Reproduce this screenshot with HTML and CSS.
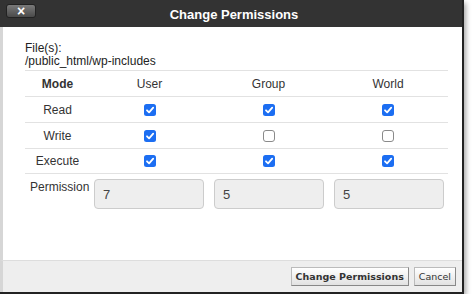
FILE: index.html
```html
<!DOCTYPE html>
<html lang="en">
<head>
  <meta charset="UTF-8" />
  <title>Change Permissions</title>
  <link rel="stylesheet" href="styles.css">
</head>
<body>

  <div class="dialog">
    <div class="titlebar">
      <button class="close-btn">&times;</button>
      <h3>Change Permissions</h3>
    </div>

    <div class="content">
      <div class="files">
        File(s):<br>
        /public_html/wp-includes
      </div>

      <div class="perm-table">
        <div class="row head">
          <span class="mode">Mode</span>
          <span>User</span>
          <span>Group</span>
          <span>World</span>
        </div>
        <div class="row">
          <span>Read</span>
          <span class="box on"></span>
          <span class="box on"></span>
          <span class="box on"></span>
        </div>
        <div class="row">
          <span>Write</span>
          <span class="box on"></span>
          <span class="box"></span>
          <span class="box"></span>
        </div>
        <div class="row">
          <span>Execute</span>
          <span class="box on"></span>
          <span class="box on"></span>
          <span class="box on"></span>
        </div>
      </div>

      <div class="perm-values">
        <span class="label">Permission</span>
        <input class="val" type="text" value="7">
        <input class="val" type="text" value="5">
        <input class="val" type="text" value="5">
      </div>
    </div>

    <div class="footer">
      <button class="btn primary">Change Permissions</button>
      <button class="btn">Cancel</button>
    </div>
  </div>

  <script>
    // draw the check marks
    document.querySelectorAll(".box").forEach(box => {
      box.innerHTML = box.classList.contains("on")
        ? '<svg width="12" height="12" viewBox="0 0 12 12"><rect x="0" y="0" width="12" height="12" rx="2.5" fill="#1c6ef2"/><path d="M3 6.3 L5.1 8.4 L9.2 3.6" fill="none" stroke="#fff" stroke-width="1.8" stroke-linecap="round" stroke-linejoin="round"/></svg>'
        : '<svg width="12" height="12" viewBox="0 0 12 12"><rect x="0.5" y="0.5" width="11" height="11" rx="2.5" fill="#fff" stroke="#8a8a8a"/></svg>';
    });
  </script>

</body>
</html>
```

FILE: styles.css
```css
* {
  box-sizing: border-box;
  margin: 0;
  padding: 0;
}

body {
  font-family: 'Liberation Sans', Arial, sans-serif;
  font-size: 12px;
  color: #333;
  background: #fff;
}

.dialog {
  width: 464px;
  border-right: 2px solid #222;
  border-bottom: 2px solid #222;
  box-shadow: 2px 3px 5px rgba(0,0,0,0.35);
}

.titlebar {
  height: 27px;
  background: #333;
  display: grid;
  grid-template-columns: 1fr auto 1fr;
  align-items: center;
  padding-left: 6px;
}

.close-btn {
  justify-self: start;
  align-self: start;
  margin-top: 4px;
  width: 30px;
  height: 14px;
  border: 1px solid #222;
  border-radius: 3px;
  background: linear-gradient(#7a7a7a, #4a4a4a);
  color: #fff;
  font-family: 'Liberation Sans', Arial, sans-serif;
  font-weight: bold;
  font-size: 14px;
  line-height: 11px;
}

h3 {
  color: #fff;
  font-size: 13px;
  font-weight: bold;
  margin-top: 1px;
}

.content {
  height: 233px;
  border-left: 3px solid #d6d6d6;
  padding: 15px 0 0 22px;
}

.files {
  line-height: 13px;
  color: #222;
}

.perm-table {
  width: 423px;
  margin-top: 2px;
}

.row {
  display: grid;
  grid-template-columns: 65px 119px 119px 120px;
  align-items: center;
  justify-items: center;
  height: 26px;
  border-top: 1px solid #e2e2e2;
}

.row:last-child {
  border-bottom: 1px solid #e2e2e2;
}

.row.head .mode {
  font-weight: bold;
}

.box {
  display: flex;
}

.perm-values {
  display: flex;
  align-items: flex-start;
  gap: 10px;
  margin-top: 5px;
  padding-left: 5px;
}

.label {
  width: 54px;
  padding-top: 1px;
  white-space: nowrap;
}

.val {
  width: 110px;
  height: 30px;
  background: #eee;
  border: 1px solid #ccc;
  border-radius: 4px;
  padding-left: 8px;
  font-family: 'Liberation Sans', Arial, sans-serif;
  font-size: 13px;
  color: #444;
}

.footer {
  height: 32px;
  background: #eee;
  border-top: 1px solid #ddd;
  border-left: 3px solid #d6d6d6;
  display: flex;
  justify-content: flex-end;
  align-items: center;
  gap: 5px;
  padding-right: 6px;
}

.btn {
  height: 19px;
  padding: 0 4px;
  background: linear-gradient(#fff, #e2e2e2);
  border: 1px solid #bbb;
  border-right-color: #888;
  border-bottom-color: #888;
  font-family: 'DejaVu Sans', Verdana, sans-serif;
  font-size: 9.5px;
  color: #333;
}

.btn.primary {
  font-weight: bold;
}
```
